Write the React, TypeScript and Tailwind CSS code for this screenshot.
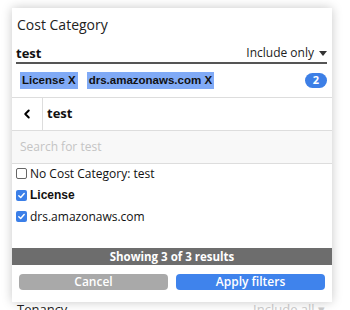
import { ChevronLeft } from "lucide-react";

const ember = "font-['Open_Sans',sans-serif]";
const arial = "font-['Liberation_Sans',Arial,sans-serif]";

function Check({ checked }: { checked: boolean }) {
  if (!checked) {
    return <span className="inline-block w-[11px] h-[11px] rounded-[2px] border border-[#666] bg-white shrink-0" />;
  }
  return (
    <span className="inline-flex items-center justify-center w-[11px] h-[11px] rounded-[2px] bg-[#3b7fe8] shrink-0">
      <svg viewBox="0 0 10 10" className="w-[9px] h-[9px]">
        <path d="M2 5.2 L4.1 7.3 L8 2.8" fill="none" stroke="white" strokeWidth="1.6" strokeLinecap="round" strokeLinejoin="round" />
      </svg>
    </span>
  );
}

export default function App() {
  const items = [
    { label: "No Cost Category: test", checked: false, bold: false },
    { label: "License", checked: true, bold: true },
    { label: "drs.amazonaws.com", checked: true, bold: false },
  ];

  return (
    <div className={`w-[350px] h-[310px] overflow-hidden bg-white ${ember}`}>
      <div className="ml-[12px] mt-[8px] w-[320px] h-[294px] bg-white flex flex-col shadow-[0_0_10px_rgba(0,0,0,0.22)] relative z-10">
        {/* Title */}
        <div className="pt-[7px] px-[5px] text-[14px] leading-[20px] text-[#222]">Cost Category</div>

        {/* Key + mode */}
        <div className="mt-[10px] ml-[4px] mr-[5px] flex items-end justify-between border-b-2 border-[#555] pb-[1px]">
          <span className="text-[13px] leading-[16px] font-bold text-[#111]">test</span>
          <span className="flex items-center gap-[5px] text-[12px] leading-[16px] text-[#222]">
            Include only
            <svg viewBox="0 0 8 5" className="w-[8px] h-[5px]">
              <path d="M0 0 L8 0 L4 5 Z" fill="#333" />
            </svg>
          </span>
        </div>

        {/* Chips */}
        <div className="h-[33px] flex items-center pl-[8px] pr-[5px] gap-[9px]">
          <span className={`bg-[#80aaf6] px-[2px] h-[17px] flex items-center text-[11.5px] font-bold text-[#111] ${arial}`}>License X</span>
          <span className={`bg-[#80aaf6] px-[2px] h-[17px] flex items-center text-[11.5px] font-bold text-[#111] ${arial}`}>drs.amazonaws.com X</span>
          <span className="ml-auto w-[22px] h-[15px] rounded-full bg-[#3d7fe6] text-white text-[11px] font-bold flex items-center justify-center">2</span>
        </div>

        {/* Back row */}
        <div className="h-[33px] flex border-t border-[#ddd]">
          <div className="w-[31px] flex items-center justify-center border-r border-[#ddd]">
            <ChevronLeft className="w-[14px] h-[14px] text-black" strokeWidth={3.4} />
          </div>
          <div className="flex items-center pl-[4px] text-[13px] font-bold text-[#111]">test</div>
        </div>

        {/* Search */}
        <div className="h-[34px] flex items-center px-[8px] bg-[#f8f8f8] border-y border-[#ddd] text-[12px] text-[#c4c4c4]">
          Search for test
        </div>

        {/* Options */}
        <div className="flex-1 flex flex-col -mt-[1px] pl-[4px]">
          {items.map((it) => (
            <div key={it.label} className="h-[21.5px] flex items-center gap-[3px]">
              <Check checked={it.checked} />
              <span className={`text-[12px] text-[#111] ${it.bold ? `font-bold ${arial}` : ""}`}>{it.label}</span>
            </div>
          ))}
        </div>

        {/* Status */}
        <div className="h-[17px] bg-[#6d6d6d] text-white text-[11.5px] font-bold flex items-center justify-center">
          Showing 3 of 3 results
        </div>

        {/* Actions */}
        <div className="h-[37px] flex items-start pt-[9px] px-[7px] gap-[8px]">
          <button className="flex-1 h-[16px] rounded-[4px] bg-[#a9a9a9] text-white text-[12px] font-semibold leading-[16px]">Cancel</button>
          <button className="flex-1 h-[16px] rounded-[4px] bg-[#3f83ec] text-white text-[12px] font-semibold leading-[16px]">Apply filters</button>
        </div>
      </div>

      {/* Page behind the popover */}
      <div className="-mt-[1px] ml-[17px] mr-[25px] flex justify-between text-[13px] leading-[16px]">
        <span className="text-[#222]">Tenancy</span>
        <span className="text-[#ccc]">Include all ▾</span>
      </div>
    </div>
  );
}
